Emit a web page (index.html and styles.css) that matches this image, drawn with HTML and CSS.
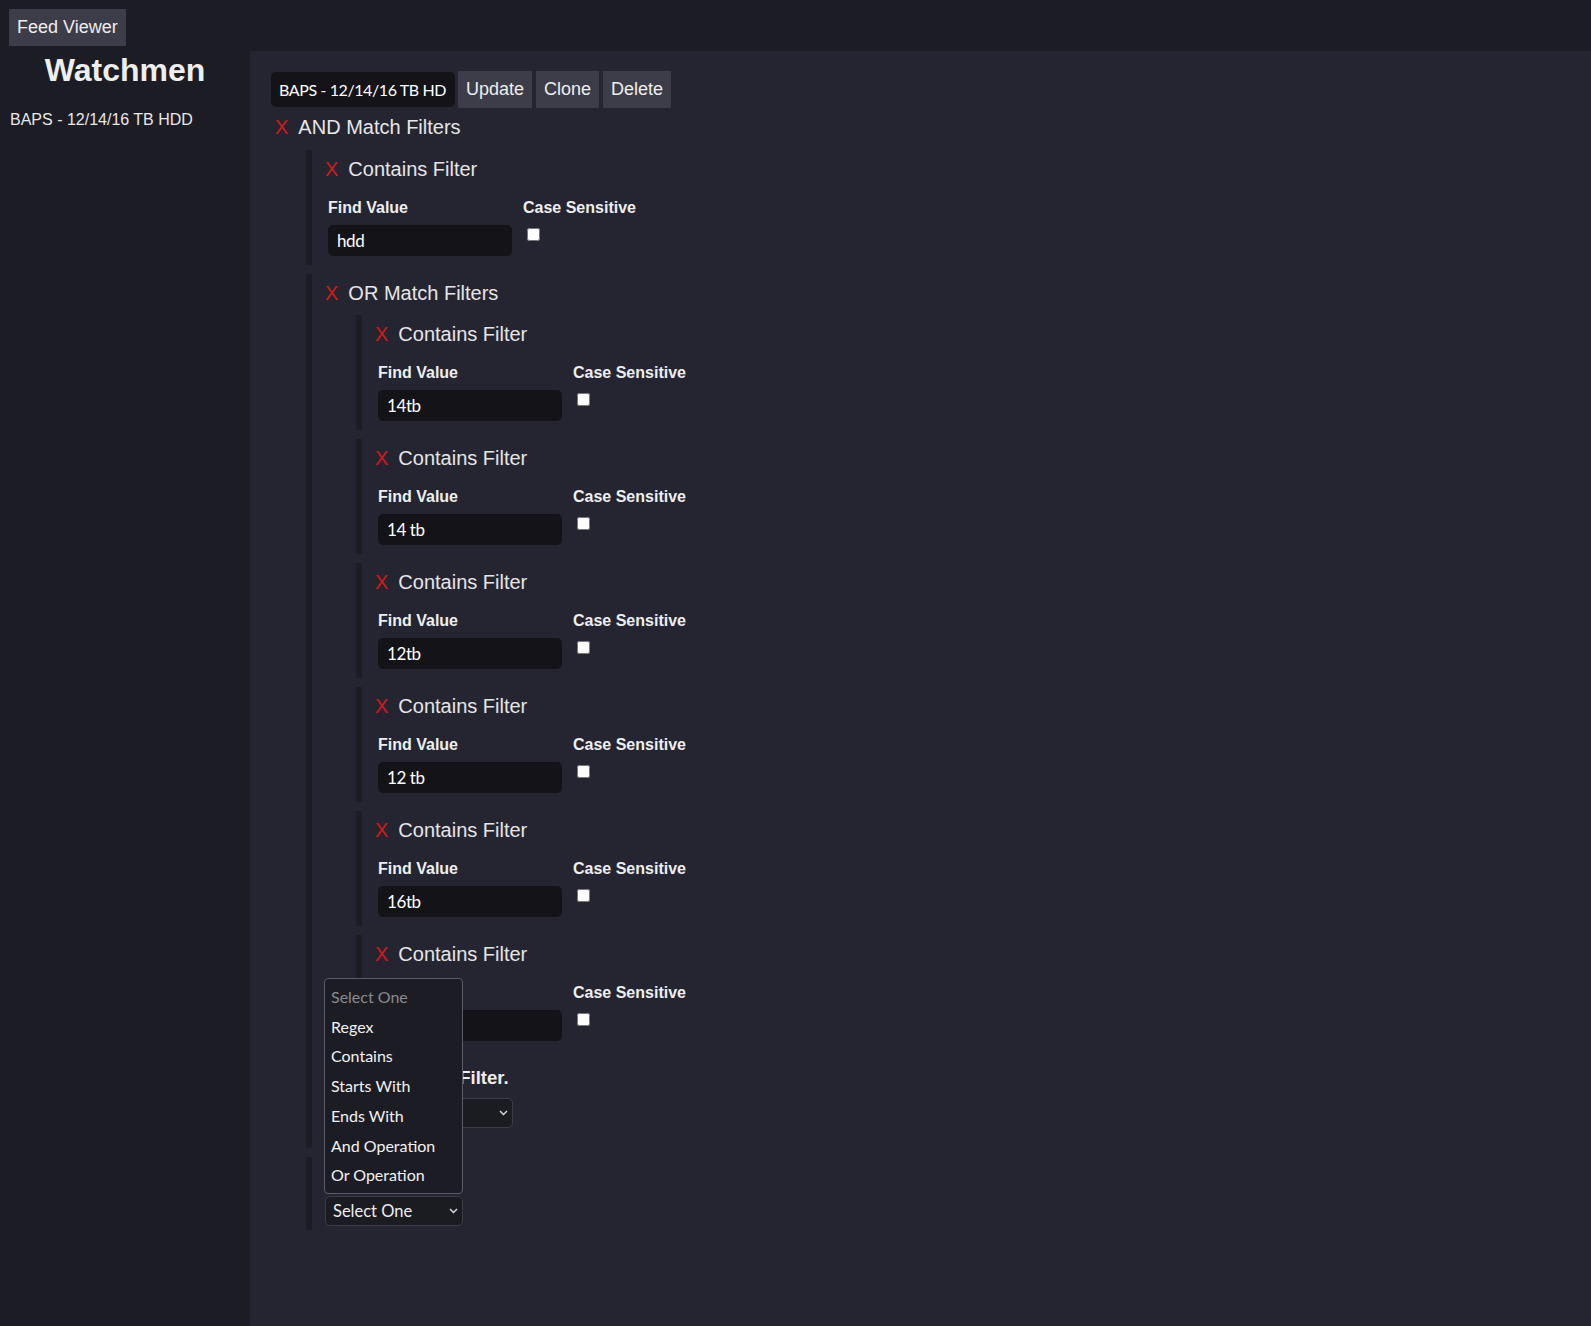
FILE: index.html
```html
<!DOCTYPE html>
<html>
  <head>
    <title>Watchmen</title>
    <meta charset="utf-8">
    <meta name="viewport" content="width=device-width, initial-scale=1">
    <link rel="stylesheet" href="styles.css">
  </head>

  <body>
    <header class="topbar">
      <button class="btn">Feed Viewer</button>
    </header>

    <div class="layout">

      <aside class="sidebar">
        <h1>Watchmen</h1>
        <ul class="watch-list">
          <li>BAPS - 12/14/16 TB HDD</li>
        </ul>
      </aside>

      <main class="editor">

        <div class="name-row">
          <input class="name-input" type="text" value="BAPS - 12/14/16 TB HDD">
          <button class="btn">Update</button>
          <button class="btn">Clone</button>
          <button class="btn">Delete</button>
        </div>

        <div class="group root">
          <div class="filter-title"><span class="remove">X</span>AND Match Filters</div>
          <div class="children">

            <div class="filter contains">
              <div class="filter-title"><span class="remove">X</span>Contains Filter</div>
              <div class="fields">
                <div class="field value">
                  <label>Find Value</label>
                  <input class="text-input" type="text" value="hdd">
                </div>
                <div class="field">
                  <label>Case Sensitive</label>
                  <input type="checkbox">
                </div>
              </div>
            </div>

            <div class="filter group">
              <div class="filter-title"><span class="remove">X</span>OR Match Filters</div>
              <div class="children">

                <div class="filter contains">
                  <div class="filter-title"><span class="remove">X</span>Contains Filter</div>
                  <div class="fields">
                    <div class="field value">
                      <label>Find Value</label>
                      <input class="text-input" type="text" value="14tb">
                    </div>
                    <div class="field">
                      <label>Case Sensitive</label>
                      <input type="checkbox">
                    </div>
                  </div>
                </div>

                <div class="filter contains">
                  <div class="filter-title"><span class="remove">X</span>Contains Filter</div>
                  <div class="fields">
                    <div class="field value">
                      <label>Find Value</label>
                      <input class="text-input" type="text" value="14 tb">
                    </div>
                    <div class="field">
                      <label>Case Sensitive</label>
                      <input type="checkbox">
                    </div>
                  </div>
                </div>

                <div class="filter contains">
                  <div class="filter-title"><span class="remove">X</span>Contains Filter</div>
                  <div class="fields">
                    <div class="field value">
                      <label>Find Value</label>
                      <input class="text-input" type="text" value="12tb">
                    </div>
                    <div class="field">
                      <label>Case Sensitive</label>
                      <input type="checkbox">
                    </div>
                  </div>
                </div>

                <div class="filter contains">
                  <div class="filter-title"><span class="remove">X</span>Contains Filter</div>
                  <div class="fields">
                    <div class="field value">
                      <label>Find Value</label>
                      <input class="text-input" type="text" value="12 tb">
                    </div>
                    <div class="field">
                      <label>Case Sensitive</label>
                      <input type="checkbox">
                    </div>
                  </div>
                </div>

                <div class="filter contains">
                  <div class="filter-title"><span class="remove">X</span>Contains Filter</div>
                  <div class="fields">
                    <div class="field value">
                      <label>Find Value</label>
                      <input class="text-input" type="text" value="16tb">
                    </div>
                    <div class="field">
                      <label>Case Sensitive</label>
                      <input type="checkbox">
                    </div>
                  </div>
                </div>

                <div class="filter contains">
                  <div class="filter-title"><span class="remove">X</span>Contains Filter</div>
                  <div class="fields">
                    <div class="field value">
                      <label>Find Value</label>
                      <input class="text-input" type="text" value="16 tb">
                    </div>
                    <div class="field">
                      <label>Case Sensitive</label>
                      <input type="checkbox">
                    </div>
                  </div>
                </div>

                <div class="filter add">
                  <h4>Add New Filter.</h4>
                  <div class="select-wrap">
                    <select class="select">
                      <option>Select One</option>
                    </select>
                    <svg class="chevron" width="9" height="6" viewBox="0 0 9 6"><path d="M1 1 L4.5 4.5 L8 1" fill="none" stroke="#ddd" stroke-width="1.4"/></svg>
                  </div>
                </div>

              </div>
            </div>

            <div class="filter add">
              <h4>Add New Filter.</h4>
              <div class="select-wrap">
                <select class="select">
                  <option>Select One</option>
                </select>
                <svg class="chevron" width="9" height="6" viewBox="0 0 9 6"><path d="M1 1 L4.5 4.5 L8 1" fill="none" stroke="#ddd" stroke-width="1.4"/></svg>

                <!-- open option list of this select -->
                <ul class="options">
                  <li class="placeholder">Select One</li>
                  <li>Regex</li>
                  <li>Contains</li>
                  <li>Starts With</li>
                  <li>Ends With</li>
                  <li>And Operation</li>
                  <li>Or Operation</li>
                </ul>
              </div>
            </div>

          </div>
        </div>

      </main>
    </div>
  </body>
</html>
```

FILE: styles.css
```css
html, body {
  margin: 0;
  min-height: 100vh;
}

* {
  box-sizing: border-box;
}

body {
  background-color: #1c1c24;
  color: #e8e8e8;
  font-family: "Liberation Sans", Arial, sans-serif;
}

.topbar {
  height: 51px;
  padding: 9px 0 0 9px;
}

.btn {
  height: 37px;
  padding: 0 8px;
  border: none;
  border-radius: 0;
  background-color: #3d3d49;
  color: #eee;
  font-family: "Liberation Sans", Arial, sans-serif;
  font-size: 18px;
}

.layout {
  display: grid;
  grid-template-columns: 250px 1fr;
  min-height: calc(100vh - 51px);
}

.sidebar {
  padding-top: 1px;
}

.sidebar h1 {
  margin: 0;
  font-size: 32px;
  text-align: center;
  color: #eee;
}

.watch-list {
  list-style: none;
  margin: 22px 0 0;
  padding: 0 0 0 10px;
  font-size: 16px;
}

.editor {
  background-color: #252532;
  padding: 20px 21px;
}

.name-row {
  display: flex;
  align-items: center;
  gap: 4px;
}

.name-input {
  width: 184px;
  height: 35px;
  padding: 0 8px;
  border: none;
  border-radius: 5px;
  background-color: #141418;
  color: #fff;
  font-family: Lato, "Segoe UI", sans-serif;
  font-size: 16px;
  letter-spacing: -0.4px;
  margin-right: -1px;
}

/* filter tree */

.root {
  margin-top: 8px;
  padding-left: 4px;
}

.filter-title {
  font-size: 20px;
  line-height: 23px;
  color: #e6e6e6;
}

.remove {
  color: #d11a1a;
  margin-right: 10px;
}

.group > .filter-title {
  margin-bottom: 10px;
}

.root > .filter-title {
  margin-bottom: 11px;
}

.children {
  margin-left: 31px;
}

.filter {
  border-left: 6px solid #1c1c24;
  margin-bottom: 9px;
}

.filter.contains {
  padding: 8px 0 9px 13px;
}

.filter.group {
  padding: 8px 0 7px 13px;
}

.filter.add {
  padding: 8px 0 4px 13px;
}

.contains > .filter-title {
  margin-bottom: 18px;
}

.fields {
  display: flex;
  padding-left: 3px;
}

.field {
  display: flex;
  flex-direction: column;
  align-items: flex-start;
}

.field.value {
  width: 195px;
}

.field label {
  font-size: 16px;
  font-weight: bold;
  margin-bottom: 8px;
  color: #eee;
}

.text-input {
  width: 184px;
  height: 31px;
  padding: 0 9px;
  border: none;
  border-radius: 5px;
  background-color: #141418;
  color: #fff;
  font-family: Lato, "Segoe UI", sans-serif;
  font-size: 17px;
  letter-spacing: -0.4px;
}

.field input[type="checkbox"] {
  width: 13px;
  height: 13px;
  margin: 3px 3px 3px 4px;
}

.add h4 {
  margin: 0 0 10px;
  font-size: 18.5px;
  line-height: 21px;
  color: #eee;
}

.select-wrap {
  position: relative;
  width: 138px;
}

.select {
  appearance: none;
  width: 138px;
  height: 30px;
  padding: 0 0 0 7px;
  border: 1px solid #3c3c48;
  border-radius: 5px;
  background-color: #1b1b22;
  color: #eee;
  font-family: Lato, "Segoe UI", sans-serif;
  font-size: 16.5px;
}

.chevron {
  position: absolute;
  right: 5px;
  top: 12px;
  pointer-events: none;
}

.options {
  position: absolute;
  left: -1px;
  bottom: calc(100% + 2px);
  width: 139px;
  margin: 0;
  padding: 3px 0;
  list-style: none;
  border: 1px solid #5c5c68;
  border-radius: 4px;
  background-color: #1c1c24;
  font-family: Lato, "Segoe UI", sans-serif;
  font-size: 16px;
  line-height: 29.7px;
  color: #f2f2f2;
  z-index: 10;
}

.options li {
  padding-left: 6px;
  white-space: nowrap;
}

.options .placeholder {
  color: #8a8a8e;
}
```
